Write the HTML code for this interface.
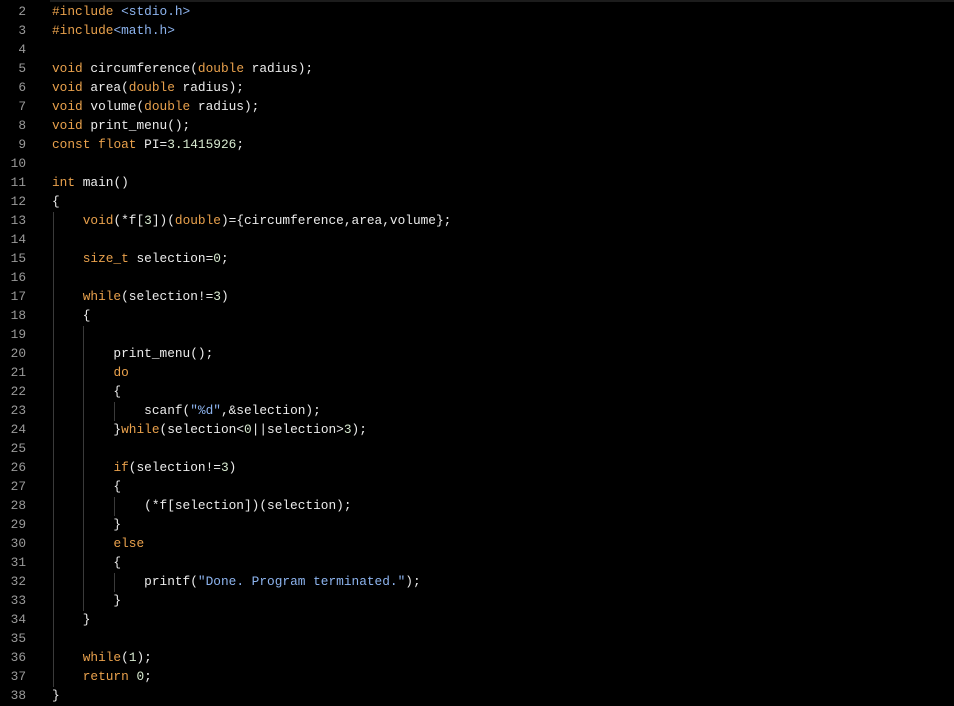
<!DOCTYPE html>
<html><head><meta charset="utf-8"><style>
body{margin:0;background:#000;width:954px;height:706px;overflow:hidden;position:relative}
.top{position:absolute;left:50px;top:0;width:904px;height:2px;background:#1c1c1c}
pre{margin:0;position:absolute;top:2px;left:0;font-family:"Liberation Mono",monospace;font-size:12.8px;line-height:19px;color:#ececec}
.n{color:#9a9a9a;display:inline-block;width:26px;text-align:right;margin-right:26px}
.k{color:#e9a14c}.s{color:#8db4ef}.d{color:#d8ead0}
.g{position:absolute;width:1px;background:#3a3a3a}
</style></head><body>
<div class="top"></div>
<div class="g" style="left:53px;top:212px;height:475px"></div>
<div class="g" style="left:83px;top:326px;height:285px"></div>
<div class="g" style="left:114px;top:402px;height:19px"></div>
<div class="g" style="left:114px;top:497px;height:19px"></div>
<div class="g" style="left:114px;top:573px;height:19px"></div>
<pre><span class="n">2</span><span class="k">#include</span> <span class="s">&lt;stdio.h&gt;</span>
<span class="n">3</span><span class="k">#include</span><span class="s">&lt;math.h&gt;</span>
<span class="n">4</span>
<span class="n">5</span><span class="k">void</span> circumference(<span class="k">double</span> radius);
<span class="n">6</span><span class="k">void</span> area(<span class="k">double</span> radius);
<span class="n">7</span><span class="k">void</span> volume(<span class="k">double</span> radius);
<span class="n">8</span><span class="k">void</span> print_menu();
<span class="n">9</span><span class="k">const</span> <span class="k">float</span> PI=<span class="d">3.1415926</span>;
<span class="n">10</span>
<span class="n">11</span><span class="k">int</span> main()
<span class="n">12</span>{
<span class="n">13</span>    <span class="k">void</span>(*f[<span class="d">3</span>])(<span class="k">double</span>)={circumference,area,volume};
<span class="n">14</span>
<span class="n">15</span>    <span class="k">size_t</span> selection=<span class="d">0</span>;
<span class="n">16</span>
<span class="n">17</span>    <span class="k">while</span>(selection!=<span class="d">3</span>)
<span class="n">18</span>    {
<span class="n">19</span>
<span class="n">20</span>        print_menu();
<span class="n">21</span>        <span class="k">do</span>
<span class="n">22</span>        {
<span class="n">23</span>            scanf(<span class="s">"%d"</span>,&amp;selection);
<span class="n">24</span>        }<span class="k">while</span>(selection&lt;<span class="d">0</span>||selection&gt;<span class="d">3</span>);
<span class="n">25</span>
<span class="n">26</span>        <span class="k">if</span>(selection!=<span class="d">3</span>)
<span class="n">27</span>        {
<span class="n">28</span>            (*f[selection])(selection);
<span class="n">29</span>        }
<span class="n">30</span>        <span class="k">else</span>
<span class="n">31</span>        {
<span class="n">32</span>            printf(<span class="s">"Done. Program terminated."</span>);
<span class="n">33</span>        }
<span class="n">34</span>    }
<span class="n">35</span>
<span class="n">36</span>    <span class="k">while</span>(<span class="d">1</span>);
<span class="n">37</span>    <span class="k">return</span> <span class="d">0</span>;
<span class="n">38</span>}</pre>
</body></html>
